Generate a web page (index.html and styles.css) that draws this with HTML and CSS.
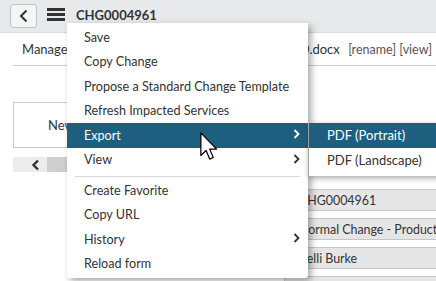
FILE: index.html
```html
<!DOCTYPE html>
<html>
<head>
<meta charset="utf-8">
<link rel="stylesheet" href="styles.css">
</head>
<body>
<div class="page">
  <header class="topbar">
    <button class="back">
      <svg width="12" height="14" viewBox="0 0 12 14"><path d="M8.5 1.5 L3 7 L8.5 12.5" fill="none" stroke="#333" stroke-width="2"/></svg>
    </button>
    <span class="burger"><i></i><i></i><i></i></span>
    <span class="title">CHG0004961</span>
  </header>
  <div class="attach">
    <span class="manage">Manage</span>
    <span class="file">0.docx <span class="links">[rename] [view]</span></span>
  </div>
  <div class="rowbox">
    <div class="newbox">New</div>
  </div>
  <div class="scroller">
    <span class="sleft">
      <svg width="10" height="12" viewBox="0 0 10 12"><path d="M7 1.5 L2.5 6 L7 10.5" fill="none" stroke="#333" stroke-width="2.4"/></svg>
    </span>
    <span class="thumb"></span>
  </div>
  <div class="fields">
    <div class="field">CHG0004961</div>
    <div class="field">Normal Change - Production</div>
    <div class="field">Kelli Burke</div>
    <div class="field"></div>
  </div>
</div>

<div class="menu">
  <div class="item">Save</div>
  <div class="item">Copy Change</div>
  <div class="item">Propose a Standard Change Template</div>
  <div class="item">Refresh Impacted Services</div>
  <div class="item active">Export <svg class="chev" width="7" height="10" viewBox="0 0 7 10"><path d="M1.5 1 L5.5 5 L1.5 9" fill="none" stroke="currentColor" stroke-width="1.8"/></svg></div>
  <div class="item">View <svg class="chev" width="7" height="10" viewBox="0 0 7 10"><path d="M1.5 1 L5.5 5 L1.5 9" fill="none" stroke="currentColor" stroke-width="1.8"/></svg></div>
  <div class="sep"></div>
  <div class="item">Create Favorite</div>
  <div class="item">Copy URL</div>
  <div class="item">History <svg class="chev" width="7" height="10" viewBox="0 0 7 10"><path d="M1.5 1 L5.5 5 L1.5 9" fill="none" stroke="currentColor" stroke-width="1.8"/></svg></div>
  <div class="item">Reload form</div>
</div>

<div class="submenu">
  <div class="item active">PDF (Portrait)</div>
  <div class="item">PDF (Landscape)</div>
</div>

<svg class="cursor" width="18" height="29" viewBox="0 0 13 21">
  <path d="M0.6 0.6 L0.6 17 L4.4 13.4 L7 19.6 L9.6 18.5 L7 12.4 L12 12.4 Z" fill="#fff" stroke="#000" stroke-width="0.9" stroke-linejoin="round"/>
</svg>
</body>
</html>
```

FILE: styles.css
```css
html, body {
  margin: 0;
  padding: 0;
  overflow: hidden;
  width: 436px;
  height: 281px;
  background: #fff;
  font-family: "Lato", "Noto Sans", sans-serif;
  color: #333;
}

.page {
  width: 436px;
  height: 281px;
  overflow: hidden;
}

.topbar {
  height: 33px;
  background: #e8e9eb;
  border-bottom: 1px solid #d9d9d9;
  box-sizing: border-box;
  display: flex;
  align-items: center;
  padding-left: 10px;
}

.back {
  width: 27px;
  height: 24px;
  box-sizing: border-box;
  border: 1px solid #c3c3c3;
  border-radius: 3px;
  background: #f4f5f6;
  display: flex;
  align-items: center;
  justify-content: center;
  padding: 0;
  margin-top: -1px;
}

.burger {
  margin-left: 10px;
  width: 18px;
  display: flex;
  flex-direction: column;
  gap: 2px;
  margin-top: -3px;
}
.burger i {
  display: block;
  height: 3px;
  background: #333;
}

.title {
  margin-left: 11px;
  font-weight: 700;
  font-size: 13px;
  color: #333;
  margin-top: -3px;
}

.attach {
  margin: 0 0 0 13px;
  height: 32px;
  border-bottom: 1px solid #cfcfcf;
  display: flex;
  align-items: center;
  justify-content: space-between;
  padding-left: 9px;
  font-size: 13px;
}
.file {
  color: #333;
  padding-right: 4px;
}
.links {
  margin-left: 5px;
  font-size: 12.5px;
  color: #555;
}

.rowbox {
  padding: 36px 0 0 13px;
}
.newbox {
  width: 220px;
  height: 46px;
  box-sizing: border-box;
  border: 1px solid #c8c8c8;
  display: flex;
  align-items: center;
  padding-left: 34px;
  font-size: 13px;
}

.scroller {
  margin: 9px 0 0 13px;
  height: 15px;
  display: flex;
}
.sleft {
  width: 34px;
  background: #ececec;
  display: flex;
  align-items: center;
  justify-content: flex-end;
  padding-right: 6px;
  box-sizing: border-box;
}
.thumb {
  width: 40px;
  background: #cfcfcf;
}

.fields {
  margin: 17px 0 0 284px;
  width: 200px;
  display: flex;
  flex-direction: column;
  gap: 7px;
}
.field {
  height: 22px;
  box-sizing: border-box;
  border: 1px solid #c6c6c6;
  background: #e6e6e6;
  font-size: 12.4px;
  display: flex;
  align-items: center;
  padding-left: 14px;
  color: #333;
  white-space: nowrap;
  overflow: hidden;
}

.menu {
  position: absolute;
  left: 67px;
  top: 23px;
  width: 241px;
  background: #fff;
  padding: 2px 0;
  box-shadow: 3px 3px 7px rgba(0, 0, 0, 0.35);
  border-radius: 0 0 3px 3px;
}
.item {
  height: 24.5px;
  display: flex;
  align-items: center;
  justify-content: space-between;
  padding: 0 8px 0 17px;
  font-size: 12.6px;
  color: #333;
  white-space: nowrap;
}
.item.active {
  background: #1e5f7f;
  color: #fff;
}
.chev {
  display: block;
  margin-top: -2px;
}
.sep {
  height: 1px;
  background: #d8d8d8;
  margin: 4px 8px 1px 8px;
}

.submenu {
  position: absolute;
  left: 309px;
  top: 123px;
  width: 140px;
  background: #fff;
  padding-bottom: 4px;
  box-shadow: 0 2px 6px rgba(0, 0, 0, 0.35);
}
.submenu .item {
  padding-left: 18px;
  font-size: 13px;
}

.cursor {
  position: absolute;
  left: 200px;
  top: 132px;
}
```
